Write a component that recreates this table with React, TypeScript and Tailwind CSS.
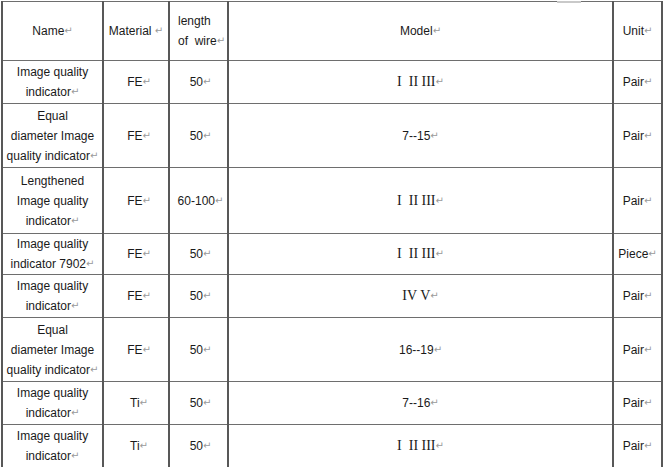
import React from 'react';

type Row = {
  name: string[];
  material: string;
  length: string;
  model: string;
  serif?: boolean;
  unit: string;
  h: string;
};

const rows: Row[] = [
  { name: ['Image quality', 'indicator'], material: 'FE', length: '50', model: 'I\u00a0\u00a0II III', serif: true, unit: 'Pair', h: 'h-[43px]' },
  { name: ['Equal', 'diameter Image', 'quality indicator'], material: 'FE', length: '50', model: '7--15', unit: 'Pair', h: 'h-[64px]' },
  { name: ['Lengthened', 'Image quality', 'indicator'], material: 'FE', length: '60-100', model: 'I\u00a0\u00a0II III', serif: true, unit: 'Pair', h: 'h-[66px]' },
  { name: ['Image quality', 'indicator 7902'], material: 'FE', length: '50', model: 'I\u00a0\u00a0II III', serif: true, unit: 'Piece', h: 'h-[40px]' },
  { name: ['Image quality', 'indicator'], material: 'FE', length: '50', model: 'IV V', serif: true, unit: 'Pair', h: 'h-[43px]' },
  { name: ['Equal', 'diameter Image', 'quality indicator'], material: 'FE', length: '50', model: '16--19', unit: 'Pair', h: 'h-[64px]' },
  { name: ['Image quality', 'indicator'], material: 'Ti', length: '50', model: '7--16', unit: 'Pair', h: 'h-[43px]' },
  { name: ['Image quality', 'indicator'], material: 'Ti', length: '50', model: 'I\u00a0\u00a0II III', serif: true, unit: 'Pair', h: 'h-[43px]' },
];

// the little return mark Word leaves after each paragraph
function Mark() {
  return <span className="font-['DejaVu_Sans'] text-[10px] text-[#9a9a9a] align-[1px]">↵</span>;
}

const cell = 'border-x-2 border-y border-x-[#585858] border-y-[#6e6e6e] p-0 text-center align-middle';

export default function App() {
  return (
    <div className="relative w-[664px] h-[467px] bg-white font-['Liberation_Sans',Arial,sans-serif] text-[12px] leading-[20px] text-[#1a1a1a]">
      <div className="absolute left-[557px] top-0 w-[24px] h-[2px] bg-[#c9c9c9]" />
      <table className="ml-px mt-px table-fixed border-collapse w-[662px]">
        <colgroup>
          <col className="w-[101px]" />
          <col className="w-[66px]" />
          <col className="w-[59px]" />
          <col className="w-[385px]" />
          <col className="w-[49px]" />
        </colgroup>
        <thead>
          <tr className="h-[59px]">
            <th className={`${cell} font-normal`}>Name<Mark /></th>
            <th className={`${cell} font-normal`}>Material <Mark /></th>
            <th className={`${cell} font-normal !text-left pl-[8px]`}>
              length<br />of&nbsp;&nbsp;wire<Mark />
            </th>
            <th className={`${cell} font-normal`}>Model<Mark /></th>
            <th className={`${cell} font-normal`}>Unit<Mark /></th>
          </tr>
        </thead>
        <tbody>
          {rows.map((r, i) => (
            <tr key={i} className={r.h}>
              <td className={cell}>
                {r.name.map((line, j) => (
                  <div key={j} className="whitespace-nowrap">
                    {line}
                    {j === r.name.length - 1 && <Mark />}
                  </div>
                ))}
              </td>
              <td className={`${cell} pl-[6px]`}>{r.material}<Mark /></td>
              <td className={`${cell} pl-[4px]`}>{r.length}<Mark /></td>
              <td className={cell}>
                <span className={r.serif ? "font-['Liberation_Serif',serif] text-[14px]" : ''}>{r.model}</span>
                <Mark />
              </td>
              <td className={`${cell} whitespace-nowrap`}>{r.unit}<Mark /></td>
            </tr>
          ))}
        </tbody>
      </table>
    </div>
  );
}
